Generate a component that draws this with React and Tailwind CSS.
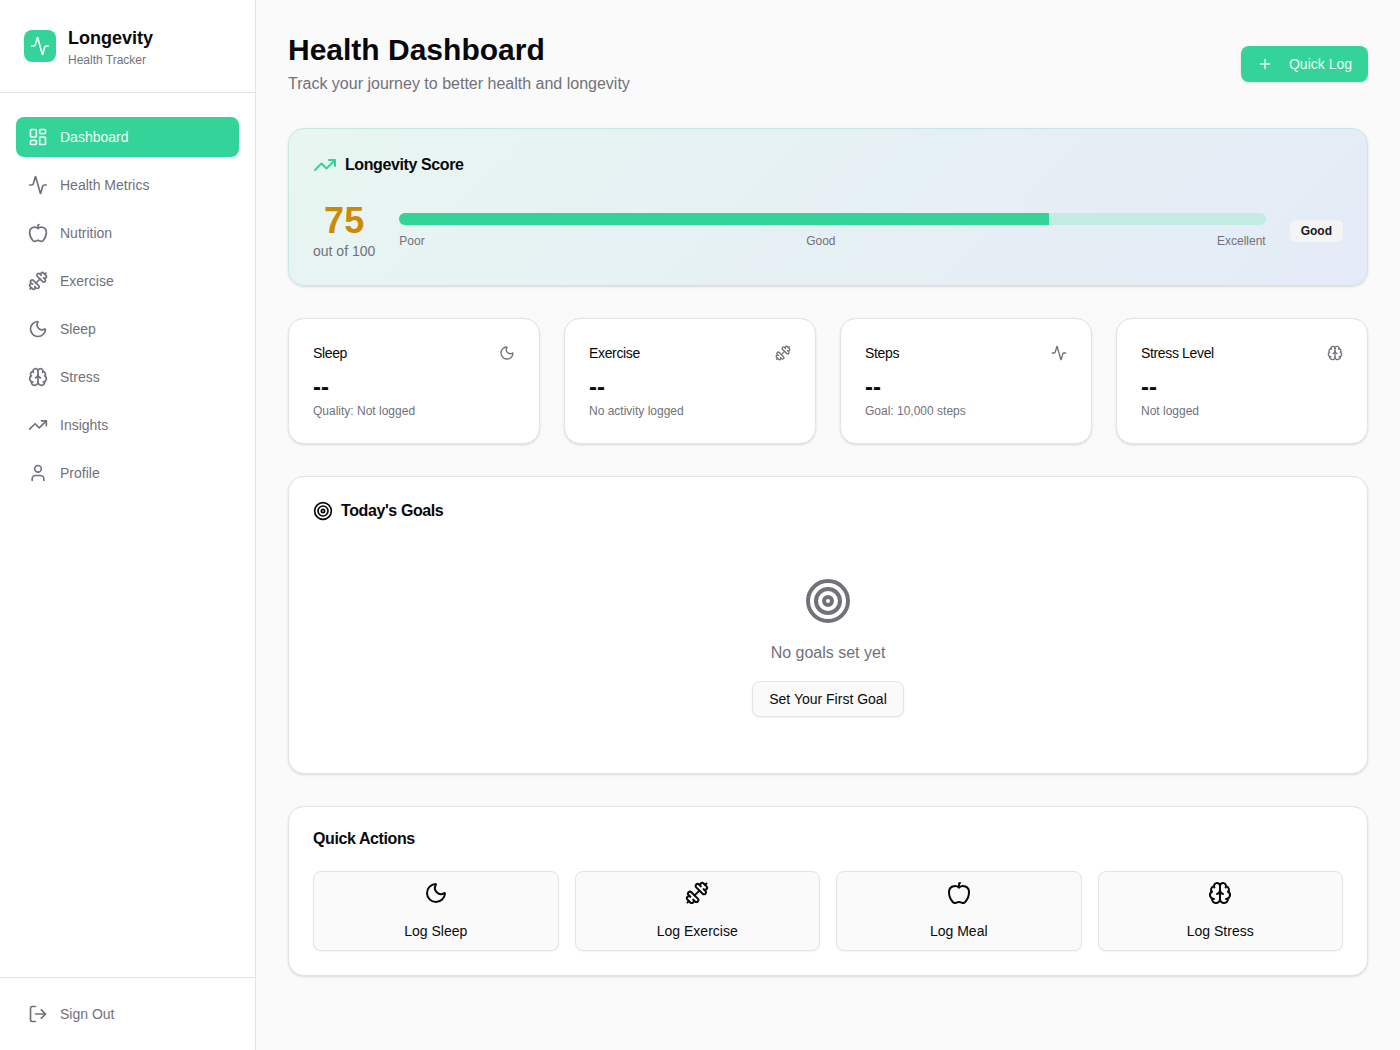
import { LayoutDashboard, Activity, Apple, Dumbbell, Moon, Brain, TrendingUp, User, LogOut, Plus, Target } from 'lucide-react';

const nav = [
  { label: 'Dashboard', icon: LayoutDashboard, active: true },
  { label: 'Health Metrics', icon: Activity },
  { label: 'Nutrition', icon: Apple },
  { label: 'Exercise', icon: Dumbbell },
  { label: 'Sleep', icon: Moon },
  { label: 'Stress', icon: Brain },
  { label: 'Insights', icon: TrendingUp },
  { label: 'Profile', icon: User },
];

const stats = [
  { title: 'Sleep', icon: Moon, note: 'Quality: Not logged' },
  { title: 'Exercise', icon: Dumbbell, note: 'No activity logged' },
  { title: 'Steps', icon: Activity, note: 'Goal: 10,000 steps' },
  { title: 'Stress Level', icon: Brain, note: 'Not logged' },
];

const actions = [
  { label: 'Log Sleep', icon: Moon },
  { label: 'Log Exercise', icon: Dumbbell },
  { label: 'Log Meal', icon: Apple },
  { label: 'Log Stress', icon: Brain },
];

export default function App() {
  return (
    <div className="flex min-h-[1050px] bg-[#fafafa] text-[#09090b] font-['Liberation_Sans',Arial,sans-serif]">
      {/* Sidebar */}
      <aside className="flex w-64 shrink-0 flex-col border-r border-[#e4e4e7] bg-white">
        <div className="flex h-[93px] items-center gap-3 border-b border-[#e4e4e7] px-6">
          <div className="flex h-8 w-8 items-center justify-center rounded-lg bg-[#34d399]">
            <Activity size={20} className="text-[#ecfdf5]" />
          </div>
          <div>
            <h1 className="text-lg leading-7 font-bold">Longevity</h1>
            <p className="text-xs leading-4 text-[#71717a]">Health Tracker</p>
          </div>
        </div>
        <nav className="flex flex-1 flex-col gap-2 p-4 pt-6">
          {nav.map((n) => (
            <div
              key={n.label}
              className={`flex h-10 items-center gap-3 rounded-lg px-3 text-sm ${
                n.active ? 'bg-[#34d399] text-[#ecfdf5]' : 'text-[#71717a]'
              }`}
            >
              <n.icon size={20} />
              <span>{n.label}</span>
            </div>
          ))}
        </nav>
        <div className="border-t border-[#e4e4e7] p-4">
          <div className="flex h-10 items-center gap-3 rounded-lg px-3 text-sm text-[#71717a]">
            <LogOut size={20} />
            <span>Sign Out</span>
          </div>
        </div>
      </aside>

      {/* Main */}
      <main className="flex min-w-0 flex-1 flex-col gap-8 p-8">
        <div className="flex items-center justify-between">
          <div>
            <h2 className="text-3xl leading-9 font-bold">Health Dashboard</h2>
            <p className="mt-1 text-base leading-6 text-[#71717a]">Track your journey to better health and longevity</p>
          </div>
          <button className="flex h-9 items-center gap-2 rounded-lg bg-[#34d399] px-4 text-sm text-[#ecfdf5] shadow-sm">
            <Plus size={16} className="mr-2" />
            Quick Log
          </button>
        </div>

        {/* Score */}
        <section className="h-[158px] rounded-2xl border border-[#c5e9e2] bg-[linear-gradient(135deg,#e8f6f1,#e4ebf7)] p-6 shadow-sm">
          <div className="flex items-center gap-2">
            <TrendingUp size={24} className="text-[#34d399]" />
            <h3 className="text-base leading-6 font-bold tracking-tight">Longevity Score</h3>
          </div>
          <div className="mt-6 flex items-center gap-6">
            <div className="text-center">
              <div className="text-4xl leading-10 font-bold text-[#ca8a04]">75</div>
              <div className="text-sm leading-5 text-[#71717a]">out of 100</div>
            </div>
            <div className="flex-1">
              <div className="h-3 overflow-hidden rounded-full bg-[#c3ebe3]">
                <div className="h-full w-3/4 bg-[#34d399]" />
              </div>
              <div className="mt-2 flex justify-between text-xs leading-4 text-[#71717a]">
                <span>Poor</span>
                <span>Good</span>
                <span>Excellent</span>
              </div>
            </div>
            <span className="rounded-md bg-[#f4f4f5] px-[11px] py-0.5 text-xs leading-[18px] font-bold text-[#18181b]">Good</span>
          </div>
        </section>

        {/* Stats */}
        <div className="grid grid-cols-4 gap-6">
          {stats.map((s) => (
            <div key={s.title} className="h-[126px] rounded-2xl border border-[#e4e4e7] bg-white p-6 shadow-sm">
              <div className="flex items-center justify-between">
                <span className="text-sm leading-5 tracking-tight">{s.title}</span>
                <s.icon size={16} className="text-[#71717a]" />
              </div>
              <div className="mt-3 text-2xl leading-6 font-bold">--</div>
              <div className="mt-1 text-xs leading-4 text-[#71717a]">{s.note}</div>
            </div>
          ))}
        </div>

        {/* Goals */}
        <section className="h-[298px] rounded-2xl border border-[#e4e4e7] bg-white px-6 pt-[22px] pb-6 shadow-sm">
          <div className="flex items-center gap-2">
            <Target size={20} />
            <h3 className="text-base leading-6 font-bold tracking-tight">Today's Goals</h3>
          </div>
          <div className="mt-[54px] flex flex-col items-center">
            <Target size={48} className="text-[#71717a]" />
            <p className="mt-4 text-base leading-6 text-[#71717a]">No goals set yet</p>
            <button className="mt-4 h-9 rounded-lg border border-[#e4e4e7] bg-[#fafafa] px-4 text-sm shadow-xs">Set Your First Goal</button>
          </div>
        </section>

        {/* Quick actions */}
        <section className="h-[170px] rounded-2xl border border-[#e4e4e7] bg-white px-6 pt-5 pb-6 shadow-sm">
          <h3 className="text-base leading-6 font-bold tracking-tight">Quick Actions</h3>
          <div className="mt-5 grid grid-cols-4 gap-4">
            {actions.map((a) => (
              <button key={a.label} className="flex h-20 flex-col items-center justify-center gap-4 rounded-lg border border-[#e4e4e7] bg-[#fafafa] text-sm shadow-xs">
                <a.icon size={24} />
                {a.label}
              </button>
            ))}
          </div>
        </section>
      </main>
    </div>
  );
}
